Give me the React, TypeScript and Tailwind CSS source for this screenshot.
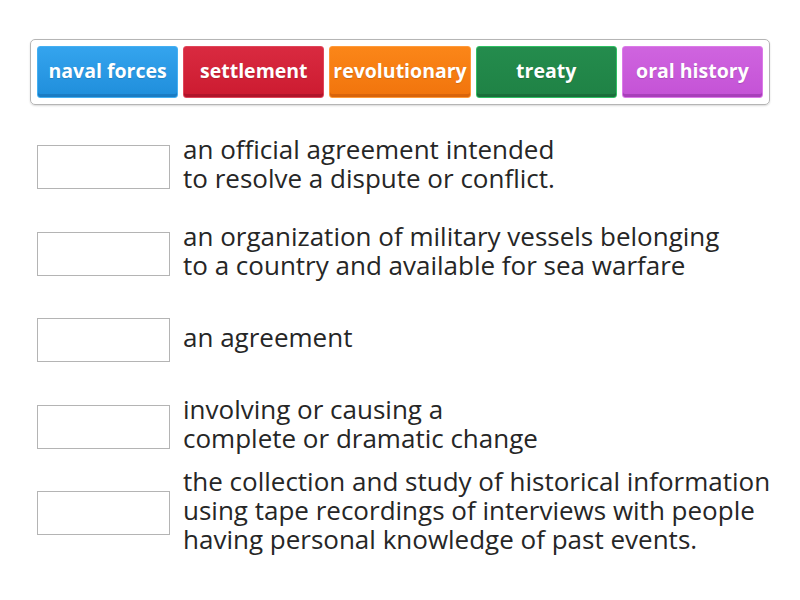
import React from 'react';

type Tile = {
  label: string;
  face: string;
};

const tiles: Tile[] = [
  { label: 'naval forces', face: 'border-[#45b0f2] bg-gradient-to-b from-[#34a4ee] to-[#1f8edb] shadow-[inset_0_-3px_0_#1a7cc4]' },
  { label: 'settlement', face: 'border-[#e0465a] bg-gradient-to-b from-[#d92a40] to-[#cc1a30] shadow-[inset_0_-3px_0_#b0142a]' },
  { label: 'revolutionary', face: 'border-[#ff9a3a] bg-gradient-to-b from-[#fb8618] to-[#f1740c] shadow-[inset_0_-3px_0_#d9640a]' },
  { label: 'treaty', face: 'border-[#2fc164] bg-gradient-to-b from-[#248c4d] to-[#1f8245] shadow-[inset_0_-3px_0_#1a6e3a]' },
  { label: 'oral history', face: 'border-[#dc7ae8] bg-gradient-to-b from-[#cf64df] to-[#c452d6] shadow-[inset_0_-3px_0_#a83fba]' },
];

const defs: string[][] = [
  ['an official agreement intended', 'to resolve a dispute or conflict.'],
  ['an organization of military vessels belonging', 'to a country and available for sea warfare'],
  ['an agreement'],
  ['involving or causing a', 'complete or dramatic change'],
  [
    'the collection and study of historical information',
    'using tape recordings of interviews with people',
    'having personal knowledge of past events.',
  ],
];

export default function App() {
  return (
    <div className="w-[800px] h-[600px] bg-white font-['Open_Sans',sans-serif] overflow-hidden">
      <div className="pt-[39px] px-[30px]">
        <div className="flex gap-[5px] rounded-[5px] border border-[#b5b5b5] p-[6px] shadow-[0_1px_2px_rgba(0,0,0,0.15)]">
          {tiles.map((t) => (
            <div
              key={t.label}
              className={`flex h-[52px] flex-1 items-center justify-center whitespace-nowrap rounded-[3px] border text-[19.5px] font-bold text-white ${t.face}`}
            >
              <span className="pb-[2px] [text-shadow:0_1px_1px_rgba(0,0,0,0.15)]">{t.label}</span>
            </div>
          ))}
        </div>
      </div>

      <div className="mt-[19px] pl-[37px]">
        {defs.map((lines, i) => (
          <div key={i} className="flex h-[86.5px] items-center gap-[13px]">
            <div className="h-[44px] w-[133px] shrink-0 border border-[#b4b4b4] bg-white" />
            <p className="whitespace-nowrap pb-[6px] text-[26px] leading-[29px] text-[#262626]">
              {lines.map((l, j) => (
                <React.Fragment key={l}>
                  {j > 0 && <br />}
                  {l}
                </React.Fragment>
              ))}
            </p>
          </div>
        ))}
      </div>
    </div>
  );
}
